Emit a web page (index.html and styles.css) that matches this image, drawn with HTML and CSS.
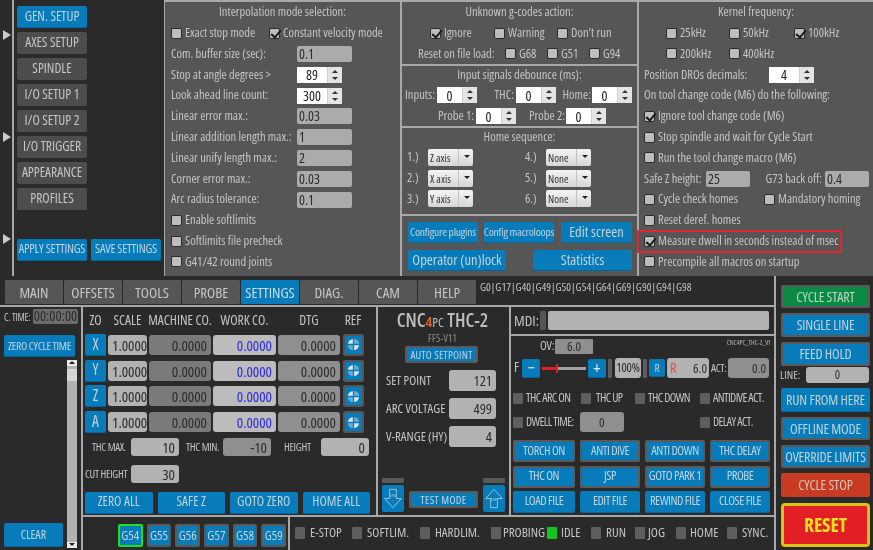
FILE: index.html
```html
<!DOCTYPE html>
<html lang="en">
<head>
<meta charset="utf-8">
<title>Mach4 CNC4PC THC-2 settings</title>
<link rel="stylesheet" href="styles.css">
</head>
<body>
<div class="app">
  <section class="top">
    <div class="strip"><i class="tri"></i><i class="tri"></i><i class="tri"></i></div>
    <nav class="side">
      <button class="b side-b blue">GEN. SETUP</button>
      <button class="b side-b grey">AXES SETUP</button>
      <button class="b side-b grey">SPINDLE</button>
      <button class="b side-b grey">I/O SETUP 1</button>
      <button class="b side-b grey">I/O SETUP 2</button>
      <button class="b side-b grey">I/O TRIGGER</button>
      <button class="b side-b grey">APPEARANCE</button>
      <button class="b side-b grey">PROFILES</button>
      <div class="side-foot">
        <button class="b blue">APPLY SETTINGS</button>
        <button class="b blue">SAVE SETTINGS</button>
      </div>
    </nav>

    <div class="panel p1">
      <div class="title">Interpolation mode selection:</div>
      <div class="row"><label class="ck w98"><i class="cb"></i>Exact stop mode</label><label class="ck"><i class="cb on"></i>Constant velocity mode</label></div>
      <div class="row"><span class="w126">Com. buffer size (sec):</span><span class="inp w55">0.1</span></div>
      <div class="row"><span class="w126">Stop at angle degrees &gt;</span><span class="spin w45"><b>89</b><i></i></span></div>
      <div class="row"><span class="w126">Look ahead line count:</span><span class="spin w45"><b>300</b><i></i></span></div>
      <div class="row"><span class="w126">Linear error max.:</span><span class="inp w55">0.03</span></div>
      <div class="row"><span class="w126">Linear addition length max.:</span><span class="inp w55">1</span></div>
      <div class="row"><span class="w126">Linear unify length max.:</span><span class="inp w55">2</span></div>
      <div class="row"><span class="w126">Corner error max.:</span><span class="inp w55">0.03</span></div>
      <div class="row"><span class="w126">Arc radius tolerance:</span><span class="inp w55">0.1</span></div>
      <div class="row"><label class="ck"><i class="cb"></i>Enable softlimits</label></div>
      <div class="row"><label class="ck"><i class="cb"></i>Softlimits file precheck</label></div>
      <div class="row"><label class="ck"><i class="cb"></i>G41/42 round joints</label></div>
    </div>

    <div class="p2">
      <div class="panel s1">
        <div class="title">Unknown g-codes action:</div>
        <div class="row in28"><label class="ck w64"><i class="cb on"></i>Ignore</label><label class="ck w63"><i class="cb"></i>Warning</label><label class="ck"><i class="cb"></i>Don't run</label></div>
        <div class="row in16"><span class="w87">Reset on file load:</span><label class="ck w42"><i class="cb"></i>G68</label><label class="ck w42"><i class="cb"></i>G51</label><label class="ck"><i class="cb"></i>G94</label></div>
      </div>
      <div class="panel s2">
        <div class="title">Input signals debounce (ms):</div>
        <div class="row in3"><span class="w32">Inputs:</span><span class="spin w40"><b>0</b><i></i></span><span class="w39 rt">THC:</span><span class="spin w40"><b>0</b><i></i></span><span class="w36 rt">Home:</span><span class="spin w40"><b>0</b><i></i></span></div>
        <div class="row in36"><span class="w38">Probe 1:</span><span class="spin w40"><b>0</b><i></i></span><span class="w50 rt">Probe 2:</span><span class="spin w40"><b>0</b><i></i></span></div>
      </div>
      <div class="panel s3">
        <div class="title short">Home sequence:</div>
        <div class="row in5"><span class="num">1.)</span><span class="sel">Z axis<i></i></span><span class="num far">4.)</span><span class="sel">None<i></i></span></div>
        <div class="row in5"><span class="num">2.)</span><span class="sel">X axis<i></i></span><span class="num far">5.)</span><span class="sel">None<i></i></span></div>
        <div class="row in5"><span class="num">3.)</span><span class="sel">Y axis<i></i></span><span class="num far">6.)</span><span class="sel">None<i></i></span></div>
      </div>
      <div class="panel s4">
        <div class="btn-row">
          <button class="b blue tight w70">Configure plugins</button>
          <button class="b blue tight w70 g6">Config macroloops</button>
          <button class="b blue big w71 g7">Edit screen</button>
        </div>
        <div class="btn-row">
          <button class="b blue big w98">Operator (un)lock</button>
          <button class="b blue big w99 g27">Statistics</button>
        </div>
      </div>
    </div>

    <div class="panel p3">
      <div class="title">Kernel frequency:</div>
      <div class="row in22"><label class="ck w63"><i class="cb"></i>25kHz</label><label class="ck w65"><i class="cb"></i>50kHz</label><label class="ck"><i class="cb on"></i>100kHz</label></div>
      <div class="row in22"><label class="ck w63"><i class="cb"></i>200kHz</label><label class="ck"><i class="cb"></i>400kHz</label></div>
      <div class="row"><span class="w125">Position DROs decimals:</span><span class="spin w45"><b>4</b><i></i></span></div>
      <div class="row">On tool change code (M6) do the following:</div>
      <div class="row"><label class="ck"><i class="cb on"></i>Ignore tool change code (M6)</label></div>
      <div class="row"><label class="ck"><i class="cb"></i>Stop spindle and wait for Cycle Start</label></div>
      <div class="row"><label class="ck"><i class="cb"></i>Run the tool change macro (M6)</label></div>
      <div class="row"><span class="w62">Safe Z height:</span><span class="inp w44">25</span><span class="w75 rt pr3">G73 back off:</span><span class="inp w44">0.4</span></div>
      <div class="row"><label class="ck w120"><i class="cb"></i>Cycle check homes</label><label class="ck"><i class="cb"></i>Mandatory homing</label></div>
      <div class="row"><label class="ck"><i class="cb"></i>Reset deref. homes</label></div>
      <div class="row hl"><label class="ck"><i class="cb on"></i>Measure dwell in seconds instead of msec</label></div>
      <div class="row"><label class="ck"><i class="cb"></i>Precompile all macros on startup</label></div>
    </div>
  </section>

  <section class="bottom">
    <div class="main">
      <header class="tabbar">
        <div class="tabs">
          <span class="tab">MAIN</span><span class="tab">OFFSETS</span><span class="tab">TOOLS</span><span class="tab">PROBE</span><span class="tab active">SETTINGS</span><span class="tab">DIAG.</span><span class="tab">CAM</span><span class="tab">HELP</span>
        </div>
        <div class="gcodes">G0|G17|G40|G49|G50|G54|G64|G69|G90|G94|G98</div>
      </header>

      <div class="work">
        <aside class="log">
          <div class="ctime"><span>C. TIME:</span><span class="clock">00:00:00</span></div>
          <button class="b blue zero">ZERO CYCLE TIME</button>
          <div class="log-body">
            <button class="b blue clear">CLEAR</button>
            <div class="scroll"><i class="up"></i><i class="thumb"></i><i class="track"></i><i class="down"></i></div>
          </div>
        </aside>

        <div class="center">
          <div class="center-top">
            <div class="dro">
              <div class="dro-grid">
                <span class="hd">ZO</span><span class="hd">SCALE</span><span class="hd">MACHINE CO.</span><span class="hd">WORK CO.</span><span class="hd">DTG</span><span class="hd">REF</span>

                <button class="b blue ax">X</button><span class="val lt clip">1.0000</span><span class="val dk">0.0000</span><span class="val lt work-v">0.0000</span><span class="val mid">0.0000</span>
                <span class="ref"><svg viewBox="0 0 16 16"><circle cx="8" cy="8" r="6" fill="#dfe7ec"/><path d="M8 1v14M1 8h14" stroke="#0a7cba" stroke-width="1.4"/><path d="M8 2a6 6 0 0 1 6 6H8zM8 14a6 6 0 0 1-6-6h6z" fill="#0a7cba" opacity=".55"/></svg></span>
                <button class="b blue ax">Y</button><span class="val lt clip">1.0000</span><span class="val dk">0.0000</span><span class="val lt work-v">0.0000</span><span class="val mid">0.0000</span>
                <span class="ref"><svg viewBox="0 0 16 16"><circle cx="8" cy="8" r="6" fill="#dfe7ec"/><path d="M8 1v14M1 8h14" stroke="#0a7cba" stroke-width="1.4"/><path d="M8 2a6 6 0 0 1 6 6H8zM8 14a6 6 0 0 1-6-6h6z" fill="#0a7cba" opacity=".55"/></svg></span>
                <button class="b blue ax">Z</button><span class="val lt clip">1.0000</span><span class="val dk">0.0000</span><span class="val lt work-v">0.0000</span><span class="val mid">0.0000</span>
                <span class="ref"><svg viewBox="0 0 16 16"><circle cx="8" cy="8" r="6" fill="#dfe7ec"/><path d="M8 1v14M1 8h14" stroke="#0a7cba" stroke-width="1.4"/><path d="M8 2a6 6 0 0 1 6 6H8zM8 14a6 6 0 0 1-6-6h6z" fill="#0a7cba" opacity=".55"/></svg></span>
                <button class="b blue ax">A</button><span class="val lt clip">1.0000</span><span class="val dk">0.0000</span><span class="val lt work-v">0.0000</span><span class="val mid">0.0000</span>
                <span class="ref"><svg viewBox="0 0 16 16"><circle cx="8" cy="8" r="6" fill="#dfe7ec"/><path d="M8 1v14M1 8h14" stroke="#0a7cba" stroke-width="1.4"/><path d="M8 2a6 6 0 0 1 6 6H8zM8 14a6 6 0 0 1-6-6h6z" fill="#0a7cba" opacity=".55"/></svg></span>
              </div>
              <div class="thc-row">
                <span class="sm l1">THC MAX.</span><span class="val lt f48">10</span>
                <span class="sm l2">THC MIN.</span><span class="val mid f48">-10</span>
                <span class="sm l3">HEIGHT</span><span class="val lt f48">0</span>
              </div>
              <div class="cut-row"><span class="sm l4">CUT HEIGHT</span><span class="val lt f48">30</span></div>
              <div class="dro-btns">
                <button class="b blue">ZERO ALL</button><button class="b blue">SAFE Z</button><button class="b blue">GOTO ZERO</button><button class="b blue">HOME ALL</button>
              </div>
            </div>

            <div class="thc">
              <div class="logo">CNC<em>4</em><small>PC</small> THC-2</div>
              <div class="ver">FF5-V11</div>
              <button class="b blue edged auto">AUTO SETPOINT</button>
              <div class="thc-val"><span>SET POINT</span><span class="val lt">121</span></div>
              <div class="thc-val"><span>ARC VOLTAGE</span><span class="val lt">499</span></div>
              <div class="thc-val"><span>V-RANGE (HY)</span><span class="val lt">4</span></div>
              <div class="thc-foot">
                <div class="arrow-col"><i class="pill"></i>
                  <button class="arrow"><svg viewBox="0 0 24 28"><path d="M8 3h8v11h6L12 25 2 14h6z" fill="none" stroke="#b5cfdc" stroke-width="1"/><text x="12" y="12" text-anchor="middle">ON</text></svg></button>
                </div>
                <button class="b blue edged test">TEST MODE</button>
                <div class="arrow-col"><i class="pill"></i>
                  <button class="arrow"><svg viewBox="0 0 24 28"><path d="M8 25h8V14h6L12 3 2 14h6z" fill="none" stroke="#b5cfdc" stroke-width="1"/><text x="12" y="17" text-anchor="middle">JSP</text></svg></button>
                </div>
              </div>
            </div>

            <div class="right-col">
              <div class="mdi"><span class="mdi-l">MDI:</span><i class="grip"></i><span class="mdi-in"></span></div>
              <div class="ctl">
                <div class="ov-row"><span>OV:</span><span class="val mid c-val">6.0</span><span class="tag">CNC4PC_THC-2_V1</span></div>
                <div class="f-row">
                  <span class="f-l">F</span>
                  <button class="b blue sq">&minus;</button>
                  <span class="slider"><i class="red"></i><i class="knob"></i><i class="rest"></i></span>
                  <button class="b blue sq">+</button>
                  <i class="grip g2"></i>
                  <span class="val lt pct">100%</span>
                  <i class="grip g2"></i>
                  <button class="b blue r-btn">R</button>
                  <span class="val lt r-val"><em>R</em>6.0</span>
                  <span class="act">ACT:</span>
                  <span class="val mid act-v">0.0</span>
                </div>
                <div class="led-row">
                  <span class="lab w68"><i class="led"></i>THC ARC ON</span>
                  <span class="lab w54 wide"><i class="led"></i>THC UP</span>
                  <span class="lab w65"><i class="led"></i>THC DOWN</span>
                  <span class="lab"><i class="led"></i>ANTIDIVE ACT.</span>
                </div>
                <div class="led-row dwell">
                  <span class="lab w187"><i class="led"></i>DWELL TIME:<span class="val mid d-val">0</span></span>
                  <span class="lab"><i class="led"></i>DELAY ACT.</span>
                </div>
                <div class="ctl-btns">
                  <button class="b blue edged">TORCH ON</button><button class="b blue edged">ANTI DIVE</button><button class="b blue edged">ANTI DOWN</button><button class="b blue edged">THC DELAY</button>
                  <button class="b blue edged">THC ON</button><button class="b blue edged">JSP</button><button class="b blue edged">GOTO PARK 1</button><button class="b blue edged">PROBE</button>
                  <button class="b blue">LOAD FILE</button><button class="b blue">EDIT FILE</button><button class="b blue">REWIND FILE</button><button class="b blue">CLOSE FILE</button>
                </div>
              </div>
            </div>
          </div>

          <div class="center-bot">
            <div class="fixtures">
              <button class="b blue fx sel-fx">G54</button><button class="b blue fx">G55</button><button class="b blue fx">G56</button><button class="b blue fx">G57</button><button class="b blue fx">G58</button><button class="b blue fx">G59</button>
            </div>
            <div class="status">
              <span class="st s-a"><i class="led"></i>E-STOP</span>
              <span class="st s-b"><i class="led"></i>SOFTLIM.</span>
              <span class="st s-c"><i class="led"></i>HARDLIM.</span>
              <span class="st s-d"><i class="led"></i>PROBING</span>
              <span class="st s-e"><i class="led green"></i>IDLE</span>
              <span class="st s-f"><i class="led"></i>RUN</span>
              <span class="st s-g"><i class="led"></i>JOG</span>
              <span class="st s-h"><i class="led"></i>HOME</span>
              <span class="st"><i class="led"></i>SYNC.</span>
            </div>
          </div>
        </div>
      </div>
    </div>

    <aside class="run">
      <button class="b green edged h23">CYCLE START</button>
      <button class="b blue edged h24 mt5">SINGLE LINE</button>
      <button class="b blue edged h24 mt5">FEED HOLD</button>
      <div class="line"><span>LINE:</span><span class="val lt">0</span></div>
      <button class="b blue h24 mt5">RUN FROM HERE</button>
      <button class="b blue edged h23 mt5">OFFLINE MODE</button>
      <button class="b blue edged h23 mt5">OVERRIDE LIMITS</button>
      <button class="b red h24 mt5">CYCLE STOP</button>
      <button class="b reset">RESET</button>
    </aside>
  </section>
</div>
</body>
</html>
```
FILE: styles.css
```css
* { box-sizing: border-box; }
html, body { margin: 0; padding: 0; background: #2a2a2a; }
body { width: 873px; height: 550px; overflow: hidden; }
.app {
  width: 873px; height: 550px; display: flex; flex-direction: column; background: #2a2a2a;
  font: 12.5px/1 "Open Sans", "Liberation Sans", Arial, sans-serif; font-stretch: 75%; color: #c4c4c4; white-space: nowrap;
  filter: blur(0.4px);
}
i { display: block; font-style: normal; flex: none; }
em { font-style: normal; }
button { font: inherit; padding: 0; margin: 0; cursor: default; }

/* generic */
.b { display: flex; align-items: center; justify-content: center; border: 0; border-radius: 2px; font-size: 13px; font-weight: 500; white-space: nowrap; overflow: hidden; flex: none; }
.blue { background: #087bbb; color: #bfd4df; border-bottom: 1px solid #06659c; }
.grey { background: #4d4d4d; color: #c6c6c6; }
.green { background: #0a8a45; color: #bcd8c6; }
.red { background: #c93a22; color: #dcc4bc; }
.edged { border: 2px solid #5a5a5a; }

/* top */
.top { height: 276px; display: grid; grid-template-columns: 14px 151px 235px 237px 236px; background: #a8a8a8; padding-top: 2px; flex: none; }
.strip { background: #2a2a2a; border-right: 2px solid #a8a8a8; margin-top: -2px; display: flex; flex-direction: column; padding: 30px 0 0 3px; gap: 92px; }
.tri { width: 0; height: 0; border-left: 8px solid #c9c9c9; border-top: 5.5px solid transparent; border-bottom: 5.5px solid transparent; }
.side { background: #2a2a2a; display: flex; flex-direction: column; gap: 4px; margin-top: -2px; padding: 6px 0 0 3px; margin-right: 1px; }
.side-b { width: 70px; height: 22px; font-size: 13.5px; }
.side-foot { display: flex; gap: 4px; margin-top: 25px; }
.side-foot .b { width: 70px; height: 22px; font-size: 12.5px; letter-spacing: -.2px; }
.panel { background: #565656; }
.p1 { padding-left: 6px; }
.p3 { padding-left: 5px; margin-left: 2px; }
.title { height: 20.8px; display: flex; align-items: center; justify-content: center; }
.p1 .title { margin-left: -6px; }
.p3 .title { margin-left: -5px; }
.title.short { height: 19px; }
.row { height: 20.8px; display: flex; align-items: center; white-space: nowrap; }
.ck { display: flex; align-items: center; gap: 3px; flex: none; }
.cb { width: 11px; height: 11px; border: 1.5px solid #2b2b2b; border-radius: 2px; background: #bdbdbd; position: relative; }
.cb.on::after { content: ""; position: absolute; left: 2.5px; top: -1px; width: 4px; height: 8px; border: solid #1c1c1c; border-width: 0 2px 2px 0; transform: rotate(40deg); }
.inp { height: 16px; background: #ababab; border-radius: 2px; color: #2c2c2c; font-size: 14px; display: flex; align-items: center; padding-left: 2px; flex: none; }
.spin { height: 16px; display: flex; flex: none; background: #fff; color: #222; font-size: 14px; }
.spin b { flex: 1; font-weight: 400; display: flex; align-items: center; justify-content: center; padding-top: 1px; }
.spin i { width: 15px; background: #e4e4e4; border-left: 1px solid #cfcfcf; position: relative; }
.spin i::before, .spin i::after { content: ""; position: absolute; left: 4px; width: 0; height: 0; border-left: 3px solid transparent; border-right: 3px solid transparent; }
.spin i::before { top: 3px; border-bottom: 3.5px solid #333; }
.spin i::after { bottom: 3px; border-top: 3.5px solid #333; }
.sel { width: 45px; height: 17px; display: flex; align-items: center; background: linear-gradient(#f4f4f4, #d6d6d6); color: #333; font-size: 11px; padding-left: 2px; position: relative; border-radius: 2px; flex: none; }
.sel i { position: absolute; right: 0; top: 0; bottom: 0; width: 15px; border-left: 1px solid #c4c4c4; }
.sel i::after { content: ""; position: absolute; left: 5px; top: 6px; border-left: 3px solid transparent; border-right: 3px solid transparent; border-top: 3.5px solid #222; }
.num { width: 21px; flex: none; }
.num.far { margin-left: 52px; }
.rt { text-align: right; }
.pr3 { padding-right: 3px; }
.in3 { padding-left: 3px; } .in5 { padding-left: 5px; } .in16 { padding-left: 16px; } .in22 { padding-left: 22px; } .in28 { padding-left: 28px; } .in36 { padding-left: 36px; }
.w32 { width: 32px; } .w36 { width: 36px; padding-right: 1px; } .w38 { width: 38px; } .w39 { width: 39px; padding-right: 2px; } .w40 { width: 40px; } .w42 { width: 42px; } .w44 { width: 44px; } .w45 { width: 45px; } .w50 { width: 50px; padding-right: 1px; } .w55 { width: 55px; } .w62 { width: 62px; } .w63 { width: 63px; } .w64 { width: 64px; } .w65 { width: 65px; } .w70 { width: 70px; } .w71 { width: 71px; } .w75 { width: 75px; } .w87 { width: 87px; } .w98 { width: 98px; } .w99 { width: 99px; } .w120 { width: 120px; } .w125 { width: 125px; } .w126 { width: 126px; }
.row > span { flex: none; }
.p2 { display: flex; flex-direction: column; gap: 2px; margin-left: 2px; }
.s1 { height: 62px; } .s2 { height: 60px; } .s3 { height: 86px; } .s4 { flex: 1; padding: 6px 0 0 6px; display: flex; flex-direction: column; gap: 7px; }
.s2 .title { height: 19px; }
.btn-row { display: flex; }
.btn-row .b { height: 21px; }
.btn-row .tight { font-size: 11.5px; letter-spacing: -.2px; }
.btn-row .big { font-size: 14.5px; }
.g6 { margin-left: 6px; } .g7 { margin-left: 7px; } .g27 { margin-left: 27px; }
.hl { width: 205px; height: 23px; margin: -1.1px 0 -1.1px -7px; padding-left: 5px; border: 2px solid #e3262e; }

/* bottom */
.bottom { flex: 1; display: flex; min-height: 0; }
.main { width: 774px; display: flex; flex-direction: column; }
.tabbar { height: 29px; display: flex; padding: 4px 0 0 5px; flex: none; }
.tabs { display: flex; gap: 1px; height: 24px; }
.tab { width: 58px; display: flex; align-items: center; justify-content: center; background: #565656; color: #c6c6c6; font-size: 15px; font-weight: 500; border-radius: 1px; }
.tab.active { background: #087bbb; color: #c9dde8; }
.gcodes { margin-left: 4px; font-size: 11.2px; color: #c4c4c4; padding-top: 1px; }
.work { flex: 1; display: grid; grid-template-columns: 81px 691px; gap: 2px; padding-top: 2px; background: #a8a8a8; min-height: 0; }
.log { background: #2a2a2a; padding: 2px 3px 2px 4px; display: flex; flex-direction: column; }
.ctime { display: flex; align-items: center; font-size: 10px; height: 15px; }
.ctime span:first-child { width: 29px; flex: none; letter-spacing: -.2px; }
.clock { width: 45px; height: 15px; background: #6b6b6b; color: #2b2b2b; font-size: 14.5px; display: flex; align-items: center; justify-content: center; border-radius: 2px; }
.log .zero { width: 71px; height: 22px; margin-top: 11px; font-size: 11.5px; letter-spacing: -.3px; }
.log-body { flex: 1; display: flex; align-items: flex-end; justify-content: space-between; margin-top: 3px; min-height: 0; }
.clear { width: 59px; height: 24px; margin-bottom: 1px; font-size: 12px; }
.scroll { width: 10px; height: 100%; margin-right: 1px; background: #b2b2b2; display: flex; flex-direction: column; }
.scroll .up, .scroll .down { height: 6px; background: #e8e8e8; position: relative; }
.scroll .up::after, .scroll .down::after { content: ""; position: absolute; left: 2px; top: 1px; border-left: 3px solid transparent; border-right: 3px solid transparent; }
.scroll .up::after { border-bottom: 3px solid #222; }
.scroll .down::after { border-top: 3px solid #222; }
.scroll .thumb { height: 12px; margin-top: 3px; background: #d6d6d6; }
.scroll .track { flex: 1; }

.center { display: flex; flex-direction: column; gap: 2px; min-height: 0; }
.center-top { height: 208px; display: grid; grid-template-columns: 293px 131px 263px; gap: 2px; }
.center-bot { flex: 1; display: grid; grid-template-columns: 205px 484px; gap: 2px; }
.dro { background: #2a2a2a; padding: 4px 0 0 2px; display: flex; flex-direction: column; }
.dro-grid { display: grid; grid-template-columns: 21px 39px 62px 63px 62px 22px; column-gap: 2px; row-gap: 3.8px; grid-template-rows: 19px repeat(4, 22px); }
.hd { display: flex; align-items: center; justify-content: center; font-size: 13.5px; font-weight: 500; white-space: nowrap; color: #c6c6c6; }
.dro-grid .ax { font-size: 15.5px; height: 22px; }
.val { display: flex; align-items: center; justify-content: flex-end; border-radius: 3px; color: #2c2c2c; font-size: 15px; padding: 1px 4px 0 0; white-space: nowrap; overflow: hidden; flex: none; }
.dro-grid .val { margin: 1px 0; }
.lt { background: #b2b2b2; }
.dk { background: #7a7a7a; }
.mid { background: #8f8f8f; }
.dro-grid .clip { justify-content: flex-start; padding-left: 4px; padding-right: 0; }
.work-v { color: #2a2ae0; background: #bcbcbc; }
.ref { margin-left: 1px; background: #087bbb; border: 2px solid #555; border-radius: 2px; display: flex; align-items: center; justify-content: center; }
.ref svg { width: 15px; height: 15px; }
.thc-row { display: flex; align-items: center; height: 18px; margin-top: 4.5px; }
.cut-row { display: flex; align-items: center; height: 18px; margin-top: 9px; }
.sm { font-size: 11px; white-space: nowrap; letter-spacing: -.3px; flex: none; }
.f48 { width: 48px; height: 18px; }
.l1 { padding-left: 7px; width: 46px; } .l2 { padding-left: 7px; width: 44px; } .l3 { padding-left: 13px; width: 50px; } .l4 { width: 46px; }
.dro-btns { display: flex; gap: 5px; margin-top: 9px; }
.dro-btns .b { width: 67.5px; height: 22px; font-size: 13.5px; }

.thc { background: #2a2a2a; padding-top: 4px; display: flex; flex-direction: column; align-items: center; }
.logo { font-size: 19px; height: 18px; line-height: 18px; font-weight: 600; color: #bdbdbd; white-space: nowrap; margin-right: 2px; }
.logo em { color: #e8691c; font-size: 15px; }
.logo small { font-size: 13px; font-weight: 400; }
.ver { font-size: 10px; line-height: 12px; color: #8e8e8e; margin-top: 3px; margin-right: 2px; letter-spacing: .2px; }
.thc .auto { width: 73px; height: 17px; margin-top: 2px; margin-right: 4px; font-size: 11px; letter-spacing: .2px; }
.thc-val { width: 100%; display: flex; align-items: center; justify-content: space-between; padding: 0 13px 0 8px; height: 21px; margin-top: 7px; font-size: 12.8px; font-weight: 500; }
.auto + .thc-val { margin-top: 7px; }
.thc-val .val { width: 47px; height: 21px; font-size: 14.5px; font-weight: 400; }
.thc-foot { width: 100%; display: flex; align-items: flex-end; justify-content: space-between; padding: 0 4px; margin-top: 31px; }
.arrow-col { display: flex; flex-direction: column; gap: 2px; width: 22px; }
.pill { height: 5px; background: #5a5a5a; border-radius: 1px; }
.arrow { height: 27px; border: 0; background: #087bbb; border-radius: 2px; display: flex; align-items: center; justify-content: center; }
.arrow svg { width: 20px; height: 25px; }
.arrow text { font-size: 5px; fill: #b5cfdc; font-family: "Liberation Sans", sans-serif; }
.thc-foot .test { width: 69px; height: 17px; font-size: 11px; letter-spacing: .3px; margin-bottom: 4px; }

.right-col { display: flex; flex-direction: column; gap: 2px; }
.mdi { height: 27px; background: #2a2a2a; display: flex; align-items: center; padding-left: 3px; flex: none; }
.mdi-l { width: 26px; font-size: 15px; flex: none; }
.grip { width: 6px; height: 19px; background: #555; border-radius: 1px; }
.mdi-in { width: 221px; height: 19px; margin-left: 2px; background: #b2b2b2; border-radius: 2px; }
.ctl { flex: 1; background: #2a2a2a; padding: 3px 0 0 2px; display: flex; flex-direction: column; }
.ov-row { display: flex; align-items: center; height: 15px; padding-left: 27px; font-size: 12.5px; position: relative; }
.ov-row span:first-child { width: 15px; flex: none; letter-spacing: -.3px; }
.ov-row .c-val { width: 38px; height: 15px; justify-content: center; padding: 0; font-size: 13px; border-radius: 1px; }
.tag { position: absolute; right: 3px; top: 0; font-size: 7px; letter-spacing: -.1px; color: #b5b5b5; }
.f-row { display: flex; align-items: center; height: 20px; margin-top: 4px; }
.f-l { width: 9px; padding-left: 1px; font-size: 13.5px; flex: none; }
.f-row .sq { width: 18px; height: 19px; font-size: 17px; color: #dfeaf0; }
.slider { width: 44px; display: flex; align-items: center; margin: 0 2px; flex: none; }
.slider .red { width: 14px; height: 3px; background: #d8232a; }
.slider .knob { width: 2px; height: 9px; background: #d8232a; }
.slider .rest { flex: 1; height: 3px; background: #a0a0a0; }
.f-row .grip.g2 { width: 4px; height: 19px; margin: 0 2px; background: #5e5e5e; }
.f-row .sq + .grip { margin-right: 3px; }
.f-row .pct { width: 26px; height: 20px; padding: 0; justify-content: center; font-size: 12.5px; letter-spacing: -.2px; }
.f-row .r-btn { width: 16px; height: 18px; font-size: 11.5px; }
.f-row .r-val { width: 42px; height: 20px; margin-left: 2px; justify-content: space-between; padding: 0 2px 0 3px; font-size: 13px; }
.r-val em { color: #e05050; font-size: 14.5px; }
.act { width: 17px; margin-left: 2px; font-size: 11.5px; letter-spacing: -.4px; flex: none; }
.f-row .act-v { width: 41px; height: 20px; font-size: 13px; padding-right: 3px; }
.led { width: 10px; height: 11px; background: #5e5e5e; border-radius: 1px; }
.led.green { background: #12c61e; }
.led-row { display: flex; align-items: center; height: 20px; margin-top: 10px; font-size: 12px; font-weight: 500; letter-spacing: -.55px; }
.dwell { margin-top: 4px; }
.lab { display: flex; align-items: center; gap: 3px; white-space: nowrap; flex: none; }
.w68 { width: 68px; } .w54 { width: 54px; } .wide { gap: 5px; } .w187 { width: 187px; }
.lab .d-val { width: 44px; height: 20px; justify-content: center; padding: 0; margin-left: 3px; font-size: 13px; font-weight: 400; letter-spacing: 0; }
.ctl-btns { display: grid; grid-template-columns: 62px 60px 60px 60px; column-gap: 5px; grid-auto-rows: 22px; row-gap: 3.5px; margin-top: 8px; }
.ctl-btns .b { height: 22px; font-size: 12.5px; letter-spacing: -.45px; }

.fixtures { background: #2a2a2a; display: flex; gap: 4px; padding: 7px 0 0 35px; }
.fx { width: 24.7px; height: 23px; border: 2px solid #5a5a5a; }
.sel-fx { border-color: #18e418; }
.status { background: #2a2a2a; display: flex; align-items: center; padding: 0 0 2px 5px; font-size: 13px; }
.st { display: flex; align-items: center; gap: 5px; flex: none; }
.st .led { height: 12px; }
.s-a { width: 57px; } .s-b { width: 68px; } .s-c { width: 71px; } .s-d { width: 56px; gap: 2px; } .s-e { width: 44px; gap: 4px; } .s-f { width: 44px; } .s-g { width: 41px; gap: 3px; } .s-h { width: 51px; gap: 4px; }

.run { flex: 1; border-left: 2px solid #a8a8a8; padding: 9px 0 0 5px; display: flex; flex-direction: column; }
.run > .b { width: 89px; font-size: 14px; letter-spacing: -.15px; }
.h23 { height: 23px; } .h24 { height: 24px; } .mt5 { margin-top: 5px; }
.line { display: flex; align-items: center; height: 16px; margin-top: 1px; margin-left: -1px; font-size: 11.5px; }
.line span:first-child { width: 26px; flex: none; }
.line .val { width: 63px; height: 16px; justify-content: center; padding: 0; font-size: 12.5px; }
.run > .reset { height: 44px; margin-top: 6px; background: #e11f25; color: #f0e21e; border: 3px solid #d8c414; font-size: 19.5px; font-weight: 700; border-radius: 4px; }
```
